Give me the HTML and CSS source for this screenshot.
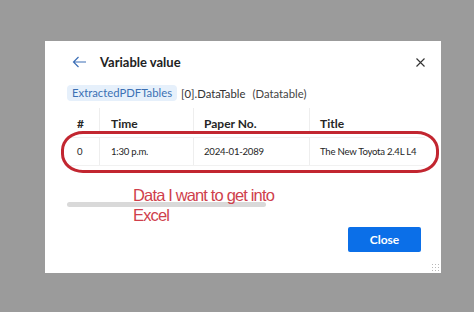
FILE: index.html
```html
<!DOCTYPE html>
<html lang="en">

<head>
    <meta charset="UTF-8">
    <meta name="viewport" content="width=device-width, initial-scale=1.0">
    <title>Variable value</title>
    <link rel="stylesheet" href="styles.css">
</head>

<body>
    <div class="dialog">
        <div class="head">
            <svg class="back" width="15" height="12" viewBox="0 0 15 12">
                <path d="M14 6H1.5M6.5 1L1.5 6l5 5" fill="none" stroke="#3d6fb6" stroke-width="1.2" />
            </svg>
            <h1>Variable value</h1>
            <svg class="close-x" width="9" height="9" viewBox="0 0 9 9">
                <path d="M0.5 0.5l8 8M8.5 0.5l-8 8" stroke="#333" stroke-width="1.1" />
            </svg>
        </div>
        <div class="path">
            <span class="chip">ExtractedPDFTables</span>
            <span>[0].DataTable</span>
            <span class="type">(Datatable)</span>
        </div>
        <div class="table">
            <div class="row th">
                <div class="c c1">#</div>
                <div class="c c2">Time</div>
                <div class="c c3">Paper No.</div>
                <div class="c c4">Title</div>
            </div>
            <div class="row">
                <div class="c c1">0</div>
                <div class="c c2">1:30 p.m.</div>
                <div class="c c3">2024-01-2089</div>
                <div class="c c4">The New Toyota 2.4L L4</div>
            </div>
        </div>
        <div class="scroll"></div>
        <div class="foot">
            <button class="btn">Close</button>
        </div>

        <!-- annotations drawn on top of the screenshot -->
        <div class="circle"></div>
        <div class="note">Data I want to get into<br>Excel</div>
        <div class="grip"></div>
    </div>
</body>

</html>
```

FILE: styles.css
```css
* {
    margin: 0;
    padding: 0;
    box-sizing: border-box;
}

body {
    background-color: #9b9b9b;
    font-family: Lato, "Open Sans", sans-serif;
    color: #262626;
    padding: 41px 0 0 45px;
    height: 312px;
    overflow: hidden;
}

.dialog {
    position: relative;
    width: 396px;
    height: 232px;
    background-color: #fff;
    padding: 7px 16px 0 22px;
}

.head {
    display: flex;
    align-items: center;
    height: 28px;
    padding-left: 5px;
}

.back {
    margin-right: 13px;
}

h1 {
    font-size: 13px;
    font-weight: 700;
    flex: 1;
    color: #222;
}

.path {
    display: flex;
    align-items: center;
    margin-top: 9px;
    height: 16px;
    font-size: 11.3px;
    color: #333;
    gap: 4px;
}

.chip {
    background-color: #e6f0fb;
    color: #3c70b4;
    border-radius: 4px;
    padding: 0 5px;
    line-height: 16px;
}

.type {
    margin-left: 3px;
    color: #444;
}

.table {
    margin-top: 7px;
    font-size: 9.6px;
    letter-spacing: -0.25px;
}

.row {
    display: flex;
    height: 28px;
    align-items: center;
    border-bottom: 1px solid #f1f1f1;
}

.th {
    height: 30px;
    padding-bottom: 6px;
    font-size: 12px;
    font-weight: 700;
    letter-spacing: 0;
}

.c {
    flex-shrink: 0;
    padding-left: 10px;
    align-self: stretch;
    display: flex;
    align-items: center;
}

.th .c {
    align-items: flex-end;
}

.c1 {
    width: 32px;
}

.c2 {
    width: 94px;
    border-left: 1px solid #eeeeee;
    padding-left: 11px;
}

.c3 {
    width: 116px;
    border-left: 1px solid #eeeeee;
}

.c4 {
    flex: 1;
    min-width: 0;
    border-left: 1px solid #eeeeee;
    white-space: nowrap;
    overflow: hidden;
}

.scroll {
    margin-top: 36px;
    width: 199px;
    height: 5px;
    border-radius: 3px;
    background-color: #d9d9d9;
}

.foot {
    display: flex;
    justify-content: flex-end;
    margin-top: 20px;
    padding-right: 4px;
}

.btn {
    width: 73px;
    height: 25px;
    border: none;
    border-radius: 2px;
    background-color: #0b6fe8;
    color: #fff;
    font-family: Lato, sans-serif;
    font-size: 12px;
    font-weight: 700;
}

.circle {
    position: absolute;
    left: 16px;
    top: 90px;
    width: 378px;
    height: 42px;
    border: 3px solid #c22630;
    border-radius: 22px / 19px;
}

.note {
    position: absolute;
    left: 88px;
    top: 144px;
    font-family: "Liberation Sans", Arial, sans-serif;
    font-size: 16.5px;
    letter-spacing: -0.85px;
    line-height: 20px;
    color: #cf3f4c;
    white-space: nowrap;
}

.grip {
    position: absolute;
    right: 2px;
    bottom: 2px;
    width: 8px;
    height: 8px;
    background-image: radial-gradient(circle, #b8b8b8 0.8px, transparent 1px);
    background-size: 3px 3px;
}
```
